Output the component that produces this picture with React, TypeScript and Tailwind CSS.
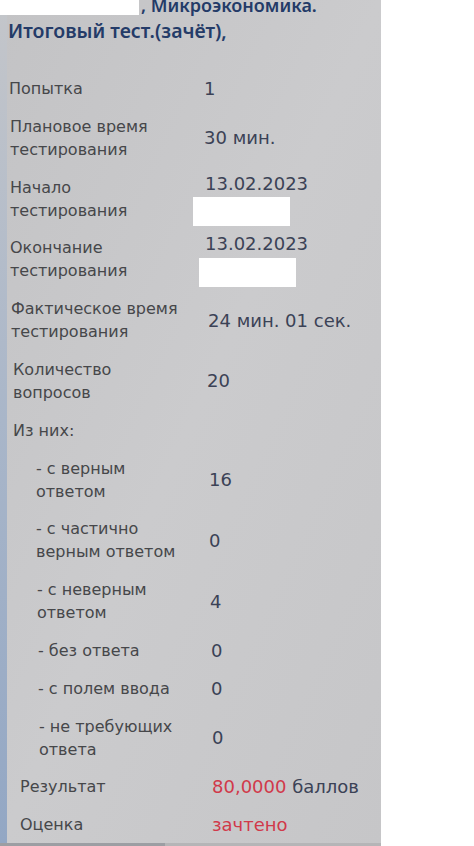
import React from 'react';

type Row = {
  label: string[];
  value?: React.ReactNode;
  labelPad: string;
  valuePad: string;
};

const font = { fontFamily: '"DejaVu Sans", Verdana, sans-serif' };

// Values column: white blocks mimic the redacted time stamps under the dates.
function DateValue({ date, box }: { date: string; box: string }) {
  return (
    <div className="flex flex-col">
      <span>{date}</span>
      <span className={'block bg-white h-[29px] w-[97px] ' + box} />
    </div>
  );
}

const rows: Row[] = [
  { label: ['Попытка'], value: '1', labelPad: 'pl-[9px]', valuePad: 'pl-[204px]' },
  { label: ['Плановое время', 'тестирования'], value: '30 мин.', labelPad: 'pl-[10px]', valuePad: 'pl-[204px]' },
  {
    label: ['Начало', 'тестирования'],
    value: <DateValue date="13.02.2023" box="-ml-[12px] mt-[2px]" />,
    labelPad: 'pl-[10px]',
    valuePad: 'pl-[205px]',
  },
  {
    label: ['Окончание', 'тестирования'],
    value: <DateValue date="13.02.2023" box="-ml-[6px] mt-[3px]" />,
    labelPad: 'pl-[10px]',
    valuePad: 'pl-[205px]',
  },
  { label: ['Фактическое время', 'тестирования'], value: '24 мин. 01 сек.', labelPad: 'pl-[11px]', valuePad: 'pl-[208px]' },
  { label: ['Количество', 'вопросов'], value: '20', labelPad: 'pl-[13px]', valuePad: 'pl-[207px]' },
  { label: ['Из них:'], labelPad: 'pl-[13px]', valuePad: 'pl-[207px]' },
  { label: ['- с верным', 'ответом'], value: '16', labelPad: 'pl-[36px]', valuePad: 'pl-[209px]' },
  { label: ['- с частично', 'верным ответом'], value: '0', labelPad: 'pl-[36px]', valuePad: 'pl-[209px]' },
  { label: ['- с неверным', 'ответом'], value: '4', labelPad: 'pl-[37px]', valuePad: 'pl-[210px]' },
  { label: ['- без ответа'], value: '0', labelPad: 'pl-[38px]', valuePad: 'pl-[211px]' },
  { label: ['- с полем ввода'], value: '0', labelPad: 'pl-[38px]', valuePad: 'pl-[211px]' },
  { label: ['- не требующих', 'ответа'], value: '0', labelPad: 'pl-[39px]', valuePad: 'pl-[212px]' },
  {
    label: ['Результат'],
    value: (
      <span>
        <span className="text-[#d1394a]">80,0000</span> баллов
      </span>
    ),
    labelPad: 'pl-[20px]',
    valuePad: 'pl-[212px]',
  },
  {
    label: ['Оценка'],
    value: <span className="text-[#d1394a]">зачтено</span>,
    labelPad: 'pl-[20px]',
    valuePad: 'pl-[212px]',
  },
];

function ResultRow({ row }: { row: Row }) {
  return (
    <div className="relative flex items-center min-h-[23px]">
      <div className={'flex flex-col text-[16px] leading-[23px] text-[#46474a] ' + row.labelPad}>
        {row.label.map((l) => (
          <span key={l} className="whitespace-nowrap">
            {l}
          </span>
        ))}
      </div>
      {row.value !== undefined && (
        <div
          className={
            'absolute inset-y-0 left-0 flex items-center text-[18px] leading-[23px] text-[#3b4256] whitespace-nowrap ' +
            row.valuePad
          }
        >
          {row.value}
        </div>
      )}
    </div>
  );
}

export default function App() {
  return (
    <div className="w-[474px] h-[846px] bg-white flex overflow-hidden" style={font}>
      <div className="w-[381px] h-[846px] flex flex-col bg-gradient-to-br from-[#c3c3c5] via-[#cbcbcd] to-[#c6c6c8]">
        <div className="flex flex-1">
          {/* bluish screen edge on the left of the photo */}
          <div className="w-[7px] bg-gradient-to-b from-[#c4c6ca] via-[#a9b6c9] to-[#93a7c4]" />
          <div className="flex-1 flex flex-col">
            <div
              className="text-[19.5px] leading-[26px] font-semibold text-[#243b68] -mt-[8px]"
              style={{ fontFamily: '"Noto Sans", "Open Sans", sans-serif' }}
            >
              <div className="flex items-start">
                <span className="block bg-white w-[139px] h-[23px] -ml-[7px]" />
                <span className="pl-[2px] text-[18px] whitespace-nowrap">, Микроэкономика.</span>
              </div>
              <div className="pl-[1px] whitespace-nowrap">Итоговый тест.(зачёт),</div>
            </div>
            <div className="flex flex-col gap-[14.8px] mt-[33px] -ml-[7px]">
              {rows.map((r) => (
                <ResultRow key={r.label.join(' ')} row={r} />
              ))}
            </div>
          </div>
        </div>
        <div className="h-[3px] flex">
          <div className="w-[165px] bg-[#9c9ea3]" />
          <div className="flex-1 bg-[#b5b5b7]" />
        </div>
      </div>
    </div>
  );
}
